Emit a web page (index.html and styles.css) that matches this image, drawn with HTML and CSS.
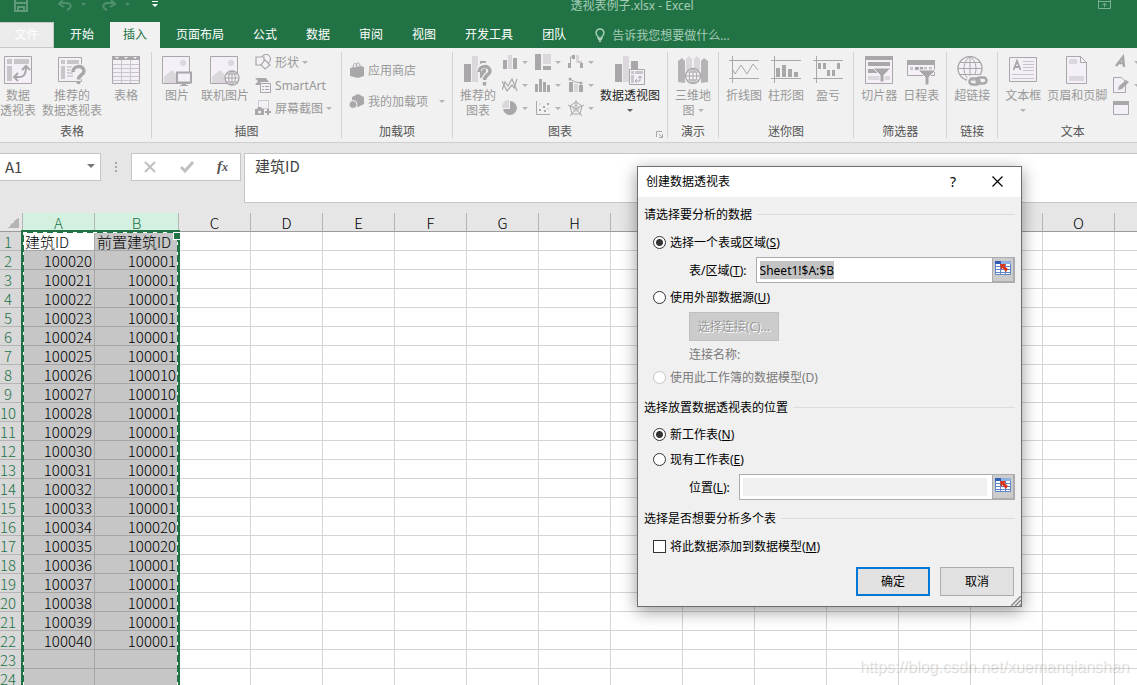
FILE: index.html
```
<!DOCTYPE html>
<html lang="zh-CN">
<head>
  <meta charset="UTF-8">
  <meta name="viewport" content="width=device-width, initial-scale=1.0">
  <title>透视表例子.xlsx - Excel</title>
  <link rel="stylesheet" href="styles.css">
</head>
<body>
  <header class="titlebar">
    <div class="quick-access">
      <svg width="14" height="12" viewBox="0 0 14 12" fill="none" stroke="#5f9a7a" stroke-width="2"><path d="M1 0V11H13V0M1 3H13M4 11V7H10V11"/></svg>
      <svg class="undo" width="28" height="12" viewBox="0 0 28 12" fill="none" stroke="#4f8f6c" stroke-width="2"><path d="M5 0L1 4L6 7M1 3H8C14 3 14 8 9 10"/><path d="M23 3H28L25.500 6Z" fill="#4f8f6c" stroke="none"/></svg>
      <svg class="redo" width="28" height="12" viewBox="0 0 28 12" fill="none" stroke="#4f8f6c" stroke-width="2"><path d="M9 0L13 4L8 7M13 3H6C0 3 0 8 5 10"/><path d="M23 3H28L25.500 6Z" fill="#4f8f6c" stroke="none"/></svg>
      <svg class="customize" width="6" height="8" viewBox="0 0 6 8" fill="#fff"><path d="M0 1H6V2H0ZM0 4H6L3 7Z"/></svg>
    </div>
    <div class="doc-title">透视表例子.xlsx - Excel</div>
    <div class="window-controls">
      <svg width="13" height="10" viewBox="0 0 13 10" fill="none" stroke="#7fb295"><path d="M.500 0V8.500H12.500V0M0 1.500H12M6.500 7V4M4 5.500L6.500 3L9 5.500"/></svg>
    </div>
  </header>

  <nav class="tabs">
    <button class="tab file">文件</button>
    <button class="tab">开始</button>
    <button class="tab active">插入</button>
    <button class="tab">页面布局</button>
    <button class="tab">公式</button>
    <button class="tab">数据</button>
    <button class="tab">审阅</button>
    <button class="tab">视图</button>
    <button class="tab">开发工具</button>
    <button class="tab">团队</button>
    <button class="tab tell-me">
      <svg width="10" height="14" viewBox="0 0 10 14" fill="none" stroke="#a6cbb6" stroke-width="1.500"><path d="M3 10V8.500C0 6.500 0.500 1 5 1S10 6.500 7 8.500V10ZM3 11.500H7M4 13.200H6"/></svg>
      告诉我您想要做什么...
    </button>
  </nav>

  <div class="ribbon">
    <section class="group first">
      <div class="group-body">
        <button class="tile">
          <svg width="28" height="28" viewBox="0 0 28 28"><path d="M.500.500H27.500V27.500H.500Z" fill="#f5f0f7" stroke="#a9a7a9"/><path d="M3 3H8V8H3ZM10 3H25V8H10ZM3 10H8V25H3Z" fill="#c9c6ca"/><path d="M11 21H16C21 21 22 17 22 11M14 17L10 21L14 25M18 14L22 10L26 14" fill="none" stroke="#a9a7a9" stroke-width="2"/></svg>
          <span>数据<br>透视表</span>
        </button>
        <button class="tile">
          <svg width="28" height="28" viewBox="0 0 28 28"><path d="M.500 1.500H23.500V25.500H.500Z" fill="#f5f0f7" stroke="#a9a7a9"/><path d="M3 4H7V8H3ZM9 4H21V8H9ZM3 10H7V23H3Z" fill="#c9c6ca"/><path d="M9 11H14M9 14H14M9 17H15M9 20H15" stroke="#c9c6ca" stroke-width="1.500"/><path d="M15 16C15 9 26 9 26 15C26 19 20.500 19 20.500 23.500" fill="none" stroke="#f1f1f1" stroke-width="6"/><path d="M15 16C15 9 26 9 26 15C26 19 20.500 19 20.500 23.500M20.500 25.500V28" fill="none" stroke="#a9a7a9" stroke-width="3.500"/></svg>
          <span>推荐的<br>数据透视表</span>
        </button>
        <button class="tile">
          <svg width="28" height="28" viewBox="0 0 28 28"><path d="M.500.500H27.500V27.500H.500Z" fill="#f5f0f7" stroke="#a9a7a9"/><path d="M0 0H28V4H0Z" fill="#a9a7a9"/><path d="M3 1H7L5 3ZM12 1H16L14 3ZM21 1H25L23 3Z" fill="#f5f0f7"/><path d="M1 8.500H27M1 12.500H27M1 16.500H27M1 20.500H27M1 24.500H27M9.500 4V27M18.500 4V27" stroke="#c9c6ca"/></svg>
          <span>表格</span>
        </button>
      </div>
      <div class="group-label">表格</div>
    </section>

    <section class="group">
      <div class="group-body">
        <button class="tile">
          <svg width="30" height="30" viewBox="0 0 30 30"><path d="M.500.500H27.500V27.500H.500Z" fill="#f5f0f7" stroke="#a9a7a9"/><circle cx="21" cy="7" r="3" fill="#dcd7dd"/><path d="M2 27V21L10 14L17 21V27Z" fill="#dcd7dd"/><path d="M15 16.500H29V26.500H15Z" fill="#f5f0f7" stroke="#a9a7a9" stroke-width="2"/><path d="M20 28H24V29H26V30H18V29H20Z" fill="#a9a7a9"/></svg>
          <span>图片</span>
        </button>
        <button class="tile">
          <svg width="30" height="30" viewBox="0 0 30 30"><path d="M.500.500H27.500V27.500H.500Z" fill="#f5f0f7" stroke="#a9a7a9"/><circle cx="21" cy="7" r="3" fill="#dcd7dd"/><path d="M2 27V21L10 14L17 21V27Z" fill="#dcd7dd"/><circle cx="22" cy="22" r="7" fill="#f5f0f7" stroke="#a9a7a9" stroke-width="1.300"/><path d="M15 22H29M22 15V29M16.500 18H27.500M16.500 26H27.500M22 15C17.500 18 17.500 26 22 29M22 15C26.500 18 26.500 26 22 29" fill="none" stroke="#a9a7a9"/></svg>
          <span>联机图片</span>
        </button>
        <div class="stack illustrations">
          <button class="row">
            <svg width="17" height="16" viewBox="0 0 17 16" fill="#f5f0f7" stroke="#a9a7a9" stroke-width="1.200"><circle cx="11" cy="5" r="4.500"/><path d="M1 3H9V11H1Z"/><path d="M10 6L15 11L10 15L6 11Z"/></svg>
            形状<i class="caret"></i>
          </button>
          <button class="row">
            <svg width="17" height="16" viewBox="0 0 17 16"><path d="M0 1H11L14 5H5L8 8H0L3 4Z" fill="#a9a7a9"/><path d="M5.500 6.500H15.500V15.500H5.500Z" fill="#f5f0f7" stroke="#a9a7a9"/><path d="M7 9H9V10H7ZM10 9H14V10H10ZM7 12H9V13H7ZM10 12H14V13H10Z" fill="#a9a7a9"/></svg>
            SmartArt
          </button>
          <button class="row">
            <svg width="17" height="16" viewBox="0 0 17 16"><path d="M3.500.500H13.500V8.500H3.500Z" fill="#f5f0f7" stroke="#a9a7a9" stroke-dasharray="1 1"/><path d="M0 9H2L3 7H6L7 9H9V15H0ZM10 11H12V9H14V11H16V13H14V15H12V13H10Z" fill="#a9a7a9"/><circle cx="4.500" cy="12" r="1.500" fill="#f5f0f7"/></svg>
            屏幕截图<i class="caret"></i>
          </button>
        </div>
      </div>
      <div class="group-label">插图</div>
    </section>

    <section class="group">
      <div class="group-body">
        <div class="stack addins">
          <button class="row">
            <svg width="16" height="16" viewBox="0 0 16 16"><path d="M1 6L12 4L15 5V14L9 16L1 14Z" fill="#a9a7a9"/><path d="M4 6C4 0 8 0 8 5M7 4C7 0 11 0 11 4" fill="none" stroke="#a9a7a9"/></svg>
            应用商店
          </button>
          <button class="row">
            <svg width="16" height="16" viewBox="0 0 16 16"><path d="M9 1L15 4V11L9 14L3 11V4Z" fill="#a9a7a9"/><circle cx="4" cy="11.500" r="4" fill="#a9a7a9" stroke="#f1f1f1"/></svg>
            我的加载项<i class="caret"></i>
          </button>
        </div>
      </div>
      <div class="group-label">加载项</div>
    </section>

    <section class="group">
      <div class="group-body">
        <button class="tile">
          <svg width="28" height="30" viewBox="0 0 28 30"><path d="M0 8H7V26H0ZM16 5H22V22H16Z" fill="#a9a7a9"/><path d="M8 0H14V26H8Z" fill="#dcd7dd"/><path d="M15 15C15 8 26 8 26 15C26 19 20.500 19 20.500 24" fill="none" stroke="#f1f1f1" stroke-width="6"/><path d="M15 16C15 9 26 9 26 15C26 19 20.500 19 20.500 24M20.500 26V29.500" fill="none" stroke="#a9a7a9" stroke-width="3.500"/></svg>
          <span>推荐的<br>图表</span>
        </button>
        <div class="chart-grid">
          <button aria-label="柱形图"><svg width="16" height="16" viewBox="0 0 16 16"><path d="M1 6H5V15H1ZM11 4H15V15H11Z" fill="#a9a7a9"/><path d="M6 1H10V15H6Z" fill="#dcd7dd"/></svg><i class="caret"></i></button>
          <button aria-label="层次结构图"><svg width="16" height="16" viewBox="0 0 16 16"><path d="M0 0H6V16H0ZM8 12H16V16H8Z" fill="#a9a7a9"/><path d="M8 0H16V10H8Z" fill="#dcd7dd"/></svg><i class="caret"></i></button>
          <button aria-label="瀑布图"><svg width="16" height="16" viewBox="0 0 16 16"><path d="M0 9H3V14H0ZM4 1H7V5H4ZM12 9H15V14H12Z" fill="#a9a7a9"/><path d="M8 1H11V9H8Z" fill="#dcd7dd"/><path d="M2.500 10V3H5M10 8H14" fill="none" stroke="#a9a7a9"/></svg><i class="caret"></i></button>
          <button aria-label="折线图"><svg width="16" height="16" viewBox="0 0 16 16" fill="none" stroke="#a9a7a9" stroke-width="1.200"><path d="M0 13L3 5L6 9L10 2L15 14"/><path d="M0 4L5 14L10 8L12 11L15 2"/></svg><i class="caret"></i></button>
          <button aria-label="统计图"><svg width="16" height="16" viewBox="0 0 16 16"><path d="M0 7H3V15H0ZM4 2H7V15H4ZM8 5H11V15H8ZM12 8H15V15H12Z" fill="#a9a7a9"/></svg><i class="caret"></i></button>
          <button aria-label="组合图"><svg width="16" height="16" viewBox="0 0 16 16"><path d="M1 5H5V15H1ZM11 8H15V15H11Z" fill="#a9a7a9"/><path d="M6 7H10V15H6Z" fill="#dcd7dd"/><path d="M2 2L7 5L13 6" fill="none" stroke="#a9a7a9"/><circle cx="2" cy="2" r="1.500" fill="#a9a7a9"/><circle cx="13" cy="6" r="1.500" fill="#a9a7a9"/></svg><i class="caret"></i></button>
          <button aria-label="饼图"><svg width="16" height="16" viewBox="0 0 16 16"><path d="M8 1A7 7 0 1 1 1 9H8Z" fill="#a9a7a9"/><path d="M7 0V8H0A7 7 0 0 1 7 0Z" fill="#dcd7dd"/></svg><i class="caret"></i></button>
          <button aria-label="散点图"><svg width="16" height="16" viewBox="0 0 16 16"><path d="M1.500 1V14.500H15" fill="none" stroke="#a9a7a9"/><path d="M4 9H6V11H4ZM8 6H10V8H8ZM12 3H14V5H12ZM9 10H11V12H9Z" fill="#a9a7a9"/><path d="M4 3H6V5H4ZM12 8H14V10H12Z" fill="#dcd7dd"/></svg><i class="caret"></i></button>
          <button aria-label="雷达图"><svg width="16" height="16" viewBox="0 0 16 16" fill="none" stroke="#a9a7a9"><path d="M8 2L14 6L12 14H4L2 6Z"/><path d="M8 5L11 7L10 11H6L5 7Z" stroke="#c9c6ca"/><path d="M8 0V9L16 5M8 9L14 16M8 9L2 16M8 9L0 5"/></svg><i class="caret"></i></button>
        </div>
        <button class="tile enabled">
          <svg width="30" height="30" viewBox="0 0 30 30"><path d="M0 8H7V26H0ZM16 5H23V14H16Z" fill="#a9a7a9"/><path d="M8 0H14V26H8Z" fill="#dcd7dd"/><path d="M14.500 13.500H29.500V28.500H14.500Z" fill="#f5f0f7" stroke="#a9a7a9"/><path d="M16 15H19V18H16ZM20 15H28V18H20ZM16 19H19V27H16Z" fill="#c9c6ca"/><path d="M20 25H25V20M22 23L20 25L22 27M23 22L25 20L27 22" fill="none" stroke="#a9a7a9"/></svg>
          <span>数据透视图</span>
          <i class="caret"></i>
        </button>
      </div>
      <div class="group-label">图表</div>
      <svg class="launcher" width="7" height="7" viewBox="0 0 7 7" fill="none" stroke="#a9a7a9"><path d="M.500 6V.500H6M3 3L6 6M6.500 3V6.500H3"/></svg>
    </section>

    <section class="group">
      <div class="group-body">
        <button class="tile">
          <svg width="30" height="28" viewBox="0 0 30 28"><path d="M0 5L4 2L7 5V27L0 26ZM23 5L26 2L30 5V26L23 27Z" fill="#b5b3b5"/><path d="M8 3L11 0L14 3V14H8ZM16 3L19 0L22 3V14H16Z" fill="#dcd7dd"/><circle cx="15" cy="20" r="7.500" fill="#f5f0f7" stroke="#a9a7a9" stroke-width="1.300"/><path d="M7.500 20H22.500M15 12.500V27.500M9 16H21M9 24H21M15 12.500C10 16 10 24 15 27.500M15 12.500C20 16 20 24 15 27.500" fill="none" stroke="#a9a7a9"/></svg>
          <span>三维地<br>图 <i class="caret inline"></i></span>
        </button>
      </div>
      <div class="group-label">演示</div>
    </section>

    <section class="group">
      <div class="group-body">
        <button class="tile">
          <svg width="30" height="28" viewBox="0 0 30 28" fill="none" stroke="#a9a7a9"><path d="M0 4.500H30M0 22.500H30M3.500 0V27"/><path d="M4 14L6 18L12 9L18 18L24 8L29 14"/></svg>
          <span>折线图</span>
        </button>
        <button class="tile">
          <svg width="30" height="28" viewBox="0 0 30 28"><path d="M0 4.500H30M0 22.500H30M3.500 0V27" stroke="#a9a7a9"/><path d="M5 12H9V21H5ZM11 9H15V21H11ZM17 13H21V21H17ZM23 16H27V21H23Z" fill="#a9a7a9"/></svg>
          <span>柱形图</span>
        </button>
        <button class="tile">
          <svg width="30" height="28" viewBox="0 0 30 28"><path d="M0 4.500H30M0 22.500H30M3.500 0V27" stroke="#a9a7a9"/><path d="M5 7H8V13H5ZM10 7H13V13H10ZM14 14H17V20H14ZM19 14H22V20H19ZM24 7H27V13H24Z" fill="#a9a7a9"/></svg>
          <span>盈亏</span>
        </button>
      </div>
      <div class="group-label">迷你图</div>
    </section>

    <section class="group">
      <div class="group-body">
        <button class="tile">
          <svg width="28" height="28" viewBox="0 0 28 28"><path d="M.500.500H27.500V27.500H.500Z" fill="#f5f0f7" stroke="#a9a7a9"/><path d="M0 0H28V4H0ZM3 6H25V10H3ZM3 13H12V17H3Z" fill="#a9a7a9"/><path d="M3 20H25V24H3Z" fill="#dcd7dd"/><path d="M8 12H26L19 19V26H15V19Z" fill="#a9a7a9" stroke="#f5f0f7"/></svg>
          <span>切片器</span>
        </button>
        <button class="tile">
          <svg width="29" height="30" viewBox="0 0 29 30"><path d="M.500 4.500H27.500V19.500H.500Z" fill="#f5f0f7" stroke="#a9a7a9"/><path d="M0 4H28V9H0ZM8 11H12V14H8ZM13 11H16V14H13Z" fill="#a9a7a9"/><path d="M3 11H6V14H3ZM17 11H20V14H17ZM22 11H25V14H22Z" fill="#c9c6ca"/><path d="M11 14H29L22 21V29H18V21Z" fill="#a9a7a9" stroke="#f5f0f7"/></svg>
          <span>日程表</span>
        </button>
      </div>
      <div class="group-label">筛选器</div>
    </section>

    <section class="group">
      <div class="group-body">
        <button class="tile">
          <svg width="31" height="30" viewBox="0 0 31 30" fill="none" stroke="#a9a7a9"><circle cx="13" cy="12.500" r="12" fill="#f5f0f7" stroke-width="1.300"/><path d="M1 12.500H25M13 .500V24.500M3 6.500H23M3 18.500H23M13 .500C5 6 5 19 13 24.500M13 .500C21 6 21 19 13 24.500"/><path d="M16 21.500H21V28.500H16C11 28.500 11 21.500 16 21.500ZM20 21.500H26C31 21.500 31 28.500 26 28.500H20" stroke="#f1f1f1" stroke-width="5"/><rect x="12.500" y="22.500" width="10" height="6" rx="3" stroke-width="2.500"/><rect x="19.500" y="21.500" width="10" height="6" rx="3" stroke-width="2.500"/></svg>
          <span>超链接</span>
        </button>
      </div>
      <div class="group-label">链接</div>
    </section>

    <section class="group last">
      <div class="group-body">
        <button class="tile">
          <svg width="28" height="28" viewBox="0 0 28 28"><path d="M.500 1.500H27.500V25.500H.500Z" fill="#f5f0f7" stroke="#a9a7a9"/><path d="M4.500 14L8 5L11.500 14M6 11H10" fill="none" stroke="#a9a7a9" stroke-width="1.800"/><path d="M14 5.500H25M14 8.500H25M14 11.500H25M14 14.500H25M3 18.500H25M3 22.500H25" stroke="#c9c6ca"/></svg>
          <span>文本框</span>
          <i class="caret"></i>
        </button>
        <button class="tile">
          <svg width="22" height="28" viewBox="0 0 22 28"><path d="M.500.500H14.500L20.500 6.500V27.500H.500Z" fill="#f5f0f7" stroke="#a9a7a9"/><path d="M14.500.500V6.500H20.500" fill="none" stroke="#a9a7a9"/><path d="M3 3H11V8H3ZM3 20H18V25H3Z" fill="#dcd7dd"/></svg>
          <span>页眉和页脚</span>
        </button>
        <div class="stack">
          <button class="row" aria-label="艺术字"><svg width="18" height="16" viewBox="0 0 18 16"><path d="M3 12L10 3L11 13M6 9H11" fill="none" stroke="#a9a7a9" stroke-width="2.500"/></svg><i class="caret"></i></button>
          <button class="row" aria-label="签名行"><svg width="18" height="16" viewBox="0 0 18 16"><path d="M.500.500H8.500L12.500 4.500V15.500H.500Z" fill="#f5f0f7" stroke="#a9a7a9"/><path d="M5 13L6 9L13 3L16 5L9 12Z" fill="#a9a7a9"/></svg><i class="caret"></i></button>
          <button class="row" aria-label="对象"><svg width="18" height="16" viewBox="0 0 18 16"><path d="M.500 1.500H15.500V14.500H.500Z" fill="#f5f0f7" stroke="#a9a7a9"/><path d="M0 1H16V5H0Z" fill="#a9a7a9"/></svg></button>
        </div>
      </div>
      <div class="group-label">文本</div>
    </section>
  </div>

  <div class="formula-row">
    <div class="name-box">
      <input type="text" value="A1" aria-label="名称框">
      <i class="caret"></i>
    </div>
    <svg class="dots" width="2" height="10" viewBox="0 0 2 10" fill="#a6a6a6"><path d="M0 0H2V2H0ZM0 4H2V6H0ZM0 8H2V10H0Z"/></svg>
    <div class="formula-buttons">
      <button aria-label="取消输入"><svg width="12" height="12" viewBox="0 0 12 12" fill="none" stroke="#c0c0c0" stroke-width="2"><path d="M1 1L11 11M11 1L1 11"/></svg></button>
      <button aria-label="输入"><svg width="14" height="12" viewBox="0 0 14 12" fill="none" stroke="#c0c0c0" stroke-width="3"><path d="M1 6L5 10L13 1"/></svg></button>
      <button class="fx" aria-label="插入函数">f<small>x</small></button>
    </div>
    <textarea class="formula" aria-label="编辑栏">建筑ID</textarea>
  </div>

  <main class="sheet">
    <table>
      <colgroup id="sheet-cols"></colgroup>
      <thead>
        <tr id="sheet-head"></tr>
      </thead>
      <tbody id="sheet-body">
        <!-- Rows are filled in by script.js -->
      </tbody>
    </table>
    <div class="marquee"></div>
    <div class="watermark">https://blog.csdn.net/xuemanqianshan</div>
  </main>

  <form class="dialog" role="dialog" aria-labelledby="dialog-title">
    <div class="dialog-title">
      <span id="dialog-title">创建数据透视表</span>
      <button type="button" class="help">?</button>
      <button type="button" class="close" aria-label="关闭"><svg width="11" height="11" viewBox="0 0 11 11" stroke="#000" stroke-width="1.200"><path d="M.500.500L10.500 10.500M10.500.500L.500 10.500"/></svg></button>
    </div>
    <div class="dialog-body">
      <h2>请选择要分析的数据</h2>
      <label class="option"><input type="radio" name="source" checked>选择一个表或区域(<u>S</u>)</label>
      <div class="field">
        <label for="range">表/区域(<u>T</u>):</label>
        <div class="range-box">
          <input type="text" id="range" class="selected-text" value="Sheet1!$A:$B">
          <button type="button" aria-label="选择区域"><svg width="16" height="14" viewBox="0 0 16 14"><path d="M.500.500H15.500V13.500H.500Z" fill="#fff" stroke="#5b86c9"/><path d="M0 0H6V3H0Z" fill="#2f5fb3"/><path d="M6 0H16V3H6Z" fill="#8fb0e0"/><path d="M1 5.500H15M1 8.500H15M1 11.500H15M5.500 3V13M10.500 3V13" stroke="#5f86c9"/><path d="M5 3H11L9.500 5L13 8L11 11L7.500 7L6 9Z" fill="#d9381e"/></svg></button>
        </div>
      </div>
      <label class="option"><input type="radio" name="source">使用外部数据源(<u>U</u>)</label>
      <button type="button" class="connection" disabled>选择连接(C)...</button>
      <div class="connection-name">连接名称:</div>
      <label class="option disabled"><input type="radio" name="source" disabled>使用此工作簿的数据模型(D)</label>

      <h2>选择放置数据透视表的位置</h2>
      <label class="option"><input type="radio" name="target" checked>新工作表(<u>N</u>)</label>
      <label class="option"><input type="radio" name="target">现有工作表(<u>E</u>)</label>
      <div class="field">
        <label for="location">位置(<u>L</u>):</label>
        <div class="range-box">
          <input type="text" id="location" class="inactive">
          <button type="button" aria-label="选择位置"><svg width="16" height="14" viewBox="0 0 16 14"><path d="M.500.500H15.500V13.500H.500Z" fill="#fff" stroke="#5b86c9"/><path d="M0 0H6V3H0Z" fill="#2f5fb3"/><path d="M6 0H16V3H6Z" fill="#8fb0e0"/><path d="M1 5.500H15M1 8.500H15M1 11.500H15M5.500 3V13M10.500 3V13" stroke="#5f86c9"/><path d="M5 3H11L9.500 5L13 8L11 11L7.500 7L6 9Z" fill="#d9381e"/></svg></button>
        </div>
      </div>

      <h2>选择是否想要分析多个表</h2>
      <label class="option"><input type="checkbox">将此数据添加到数据模型(<u>M</u>)</label>
      <div class="dialog-actions">
        <button type="button" class="primary">确定</button>
        <button type="button">取消</button>
      </div>
    </div>
    <svg class="grip" width="10" height="10" viewBox="0 0 10 10" stroke="#8a8a8a" stroke-width="1.500"><path d="M0 10L10 0M4 10L10 4M8 10L10 8"/></svg>
  </form>

  <script src="script.js"></script>
</body>
</html>
```
FILE: styles.css
```
* {
  box-sizing: border-box;
}
body {
  margin: 0;
  height: 100vh;
  display: flex;
  flex-direction: column;
  position: relative;
  overflow: hidden;
  background-color: #e6e6e6;
  font-family: "Noto Sans", "Noto Sans CJK SC", sans-serif;
  font-size: 12px;
  line-height: 15px;
}
button, input, textarea {
  font: inherit;
  color: inherit;
  margin: 0;
  padding: 0;
  border: none;
  background: none;
}
svg {
  display: block;
  flex: none;
}
.caret {
  display: inline-block;
  flex: none;
  border: 3px solid transparent;
  border-top-color: #b5b5b5;
  border-bottom: none;
}

/* Title bar and tabs */
.titlebar {
  display: flex;
  height: 22px;
  padding: 0 26px 0 14px;
  background-color: #217346;
}
.quick-access {
  display: flex;
  flex: 4;
}
.undo {
  margin-left: 30px;
}
.redo {
  margin-left: 16px;
}
.customize {
  margin-left: 22px;
}
.doc-title {
  color: #a6cbb6;
  line-height: 12px;
}
.window-controls {
  display: flex;
  flex: 3;
  justify-content: flex-end;
}
.tabs {
  display: flex;
  gap: 3px;
  height: 26px;
  background-color: #217346;
}
.tab {
  padding: 0 13px 2px;
  color: #fff;
  white-space: nowrap;
}
.tab.file {
  width: 54px;
  background-color: #ebebeb;
  border: 1px solid #c8c8c8;
  border-left: none;
}
.tab.active {
  background-color: #f1f1f1;
  color: #217346;
}
.tab.tell-me {
  display: flex;
  align-items: center;
  gap: 7px;
  padding-bottom: 0;
  color: #a6cbb6;
}

/* Ribbon */
.ribbon {
  display: flex;
  height: 95px;
  padding: 4px 0;
  background-color: #f1f1f1;
  border-bottom: 1px solid #cfcfcf;
  overflow: hidden;
}
.group {
  flex: none;
  display: flex;
  flex-direction: column;
  justify-content: space-between;
  position: relative;
  padding: 2px 7px 0;
  border-right: 1px solid #d2d2d2;
  color: #999;
}
.group.first {
  padding-left: 0;
}
.group.last {
  border-right: none;
}
.group-body {
  display: flex;
  gap: 6px;
}
.group-label {
  color: #555;
  text-align: center;
  line-height: 12px;
}
.tile {
  display: flex;
  flex-direction: column;
  align-items: center;
  min-width: 36px;
  padding-top: 2px;
}
.tile svg {
  margin-bottom: 4px;
}
.tile svg[height="30"] {
  margin-bottom: 2px;
}
.tile > .caret {
  margin-top: 6px;
}
.caret.inline {
  margin-bottom: 3px;
}
.tile.enabled {
  color: #262626;
}
.tile.enabled .caret {
  border-top-color: #5f5f5f;
}
.stack {
  display: flex;
  flex-direction: column;
  gap: 7px;
}
.illustrations {
  width: 79px;
}
.addins {
  width: 96px;
  padding-top: 8px;
  gap: 15px;
}
.row {
  display: flex;
  align-items: center;
  gap: 3px;
  height: 16px;
  white-space: nowrap;
}
.addins .row {
  width: 100%;
}
.addins .caret {
  margin-left: auto;
}
.chart-grid {
  display: grid;
  grid-template-columns: repeat(3, 26px);
  align-content: start;
  gap: 7px;
}
.chart-grid button {
  display: flex;
  align-items: center;
  gap: 4px;
  height: 16px;
}
.launcher {
  position: absolute;
  right: 4px;
  bottom: 0;
}

/* Formula bar */
.formula-row {
  display: flex;
  align-items: flex-start;
  height: 70px;
  padding-top: 10px;
  color: #444;
  font-family: "Noto Sans CJK SC", sans-serif;
  font-size: 15px;
}
.name-box {
  display: flex;
  align-items: center;
  width: 101px;
  height: 28px;
  padding: 0 5px 2px;
  background-color: #fff;
  border: 1px solid #c6c6c6;
  border-left: none;
}
.name-box input {
  flex: 1;
  min-width: 0;
}
.formula-row .caret {
  border-width: 4px 4px 0;
  border-top-color: #777;
}
.dots {
  margin: 9px 14px;
}
.formula-buttons {
  display: flex;
  justify-content: space-between;
  align-items: center;
  width: 110px;
  height: 28px;
  padding: 0 12px;
  background-color: #fff;
  border: 1px solid #c6c6c6;
}
.fx {
  font-family: "Liberation Serif", serif;
  font-style: italic;
  font-weight: bold;
  color: #555;
}
.fx small {
  font-size: 12px;
}
.formula {
  flex: 1;
  height: 50px;
  margin-left: 3px;
  padding: 2px 10px;
  line-height: 20px;
  background-color: #fff;
  border: 1px solid #c6c6c6;
  border-right: none;
  resize: none;
}

/* Sheet */
.sheet {
  flex: 1;
  position: relative;
  overflow: hidden;
  font-family: "Noto Sans CJK SC", sans-serif;
  font-weight: 300;
  font-size: 15px;
}
.sheet table {
  width: 0;
  table-layout: fixed;
  border-spacing: 0;
  background-color: #fff;
}
.col-rows {
  width: 23px;
}
.col {
  width: 72px;
}
.col-wide {
  width: 84px;
}
.sheet th, .sheet td {
  height: 19px;
  padding: 2px 2px 0;
  border-right: 1px solid #d4d4d4;
  border-bottom: 1px solid #d4d4d4;
  line-height: 16px;
  font-weight: 300;
  color: #000;
  white-space: nowrap;
}
.sheet thead th {
  background-color: #e6e6e6;
  border-right-color: #b5b5b5;
  border-bottom-color: #9b9b9b;
}
.sheet thead th.picked {
  background-color: #d3f0e0;
  color: #217346;
}
.sheet thead .corner {
  background: linear-gradient(135deg, transparent 50%, #b4b4b4 50%) 8px 4px / 11px 11px no-repeat #e6e6e6;
}
.sheet tbody th {
  padding-right: 6px;
  padding-left: 0;
  background-color: #d8d8d8;
  border-color: #b5b5b5;
  color: #217346;
}
.sheet td.picked {
  background-color: #c6c6c6;
  border-color: #a6a6a6;
}
.sheet td.current {
  background-color: #fff;
}
.sheet td.number {
  text-align: right;
}
/* Marching ants around the copied columns */
.marquee {
  position: absolute;
  top: 17px;
  bottom: 0;
  left: 21px;
  width: 159px;
  border: 2px solid #217346;
  border-bottom: none;
  background:
    repeating-linear-gradient(to right, #fff 0 4px, #217346 4px 10px) top / 100% 1px no-repeat,
    repeating-linear-gradient(to bottom, #fff 0 3px, #217346 3px 10px) left / 1px 100% no-repeat,
    repeating-linear-gradient(to bottom, #fff 0 3px, #217346 3px 10px) right / 1px 100% no-repeat;
}
.marquee::after {
  content: "";
  position: absolute;
  top: 0;
  right: -3px;
  width: 6px;
  height: 6px;
  background-color: #217346;
  border: 1px solid #fff;
}
.watermark {
  position: absolute;
  right: 8px;
  bottom: 9px;
  font-family: "Liberation Sans", sans-serif;
  font-size: 16px;
  font-weight: normal;
  line-height: 18px;
  color: rgba(255, 255, 255, 0.6);
  text-shadow: 1px 1px 1px rgba(0, 0, 0, 0.18);
}

/* Dialog */
.dialog {
  position: absolute;
  top: 166px;
  left: 637px;
  width: 385px;
  background-color: #f0f0f0;
  border: 1px solid #6e6e6e;
  box-shadow: 0 4px 16px rgba(0, 0, 0, 0.4);
  color: #000;
}
.dialog-title {
  display: flex;
  align-items: center;
  height: 30px;
  padding: 0 18px 2px 8px;
  background-color: #fff;
}
.dialog-title span {
  flex: 1;
}
.help {
  margin-right: 36px;
  font-size: 14px;
}
.dialog-body {
  padding: 5px 6px 10px;
}
.dialog h2 {
  display: flex;
  align-items: center;
  gap: 5px;
  height: 25px;
  margin: 5px 0 2px;
  font-size: 12px;
  font-weight: normal;
}
.dialog h2:first-child {
  margin: 0 0 3px;
}
.dialog h2:last-of-type {
  margin: 6px 0 3px;
}
.dialog h2::after {
  content: "";
  flex: 1;
  border-top: 1px solid #dcdcdc;
}
.option {
  display: flex;
  align-items: center;
  height: 25px;
  padding-left: 9px;
}
.option input {
  appearance: none;
  width: 13px;
  height: 13px;
  margin-right: 4px;
  background-color: #fff;
  border: 1px solid #333;
}
.option input[type="radio"] {
  border-radius: 50%;
}
.option input:checked {
  background: radial-gradient(circle, #333 3px, #fff 4px);
}
.option.disabled {
  color: #7a7a7a;
}
.option.disabled input {
  border-color: #c4c4c4;
}
.field {
  display: flex;
  align-items: center;
  gap: 9px;
  height: 26px;
  margin: 2px 0;
  padding-left: 45px;
}
.range-box {
  flex: 1;
  display: flex;
  height: 26px;
  background-color: #fff;
  border: 1px solid #ababb0;
}
.range-box input {
  flex: 1;
  min-width: 0;
  margin: 3px;
}
.range-box .selected-text {
  flex: none;
  field-sizing: content;
  background-color: #c3c3c3;
}
.range-box .inactive {
  margin-right: 5px;
  background-color: #f0f0f0;
}
.range-box button {
  display: flex;
  align-items: flex-start;
  width: 22px;
  margin-left: auto;
  padding: 3px 2px;
  background-color: #ccc;
  border: solid #ababb0;
  border-width: 0 1px 1px;
}
.connection {
  display: block;
  width: 90px;
  height: 29px;
  margin: 2px 0 2px 45px;
  background-color: #ccc;
  border: 1px solid #bfbfbf;
  color: #999;
  text-shadow: 1px 1px 0 #fff;
}
.connection-name {
  height: 20px;
  margin: 2px 0 2px 45px;
  line-height: 23px;
  color: #7a7a7a;
}
.dialog-actions {
  display: flex;
  justify-content: flex-end;
  gap: 10px;
  margin-top: 8px;
  padding-right: 1px;
}
.dialog-actions button {
  width: 74px;
  height: 29px;
  background-color: #e1e1e1;
  border: 1px solid #adadad;
}
.dialog-actions .primary {
  border: 2px solid #0078d7;
}
.grip {
  position: absolute;
  right: 0;
  bottom: 0;
}
```
FILE: script.js
```
const firstId = 100020;
const parents = [
  100001, 100001, 100001, 100001, 100001, 100001, 100010,
  100010, 100001, 100001, 100001, 100001, 100001, 100001,
  100020, 100020, 100001, 100001, 100001, 100001, 100001
];
const letters = 'ABCDEFGHIJKLMNOPQRSTUVWXYZ'.split('');
const rowCount = 60;

const cols = letters.map(l => `<col class="${l === 'B' ? 'col-wide' : 'col'}">`);
document.getElementById('sheet-cols').innerHTML = '<col class="col-rows">' + cols.join('');

const heads = letters.map(l => `<th class="${l < 'C' ? 'picked' : ''}">${l}</th>`);
document.getElementById('sheet-head').innerHTML = '<th class="corner"></th>' + heads.join('');

function cell(row, letter) {
  if (letter > 'B') return '<td></td>';
  if (row === 1) {
    return letter === 'A'
      ? '<td class="picked current">建筑ID</td>'
      : '<td class="picked">前置建筑ID</td>';
  }
  const i = row - 2;
  if (i >= parents.length) return '<td class="picked"></td>';
  return `<td class="picked number">${letter === 'A' ? firstId + i : parents[i]}</td>`;
}

let rows = '';
for (let row = 1; row <= rowCount; row++) {
  rows += `<tr><th>${row}</th>${letters.map(l => cell(row, l)).join('')}</tr>`;
}
document.getElementById('sheet-body').innerHTML = rows;
```
